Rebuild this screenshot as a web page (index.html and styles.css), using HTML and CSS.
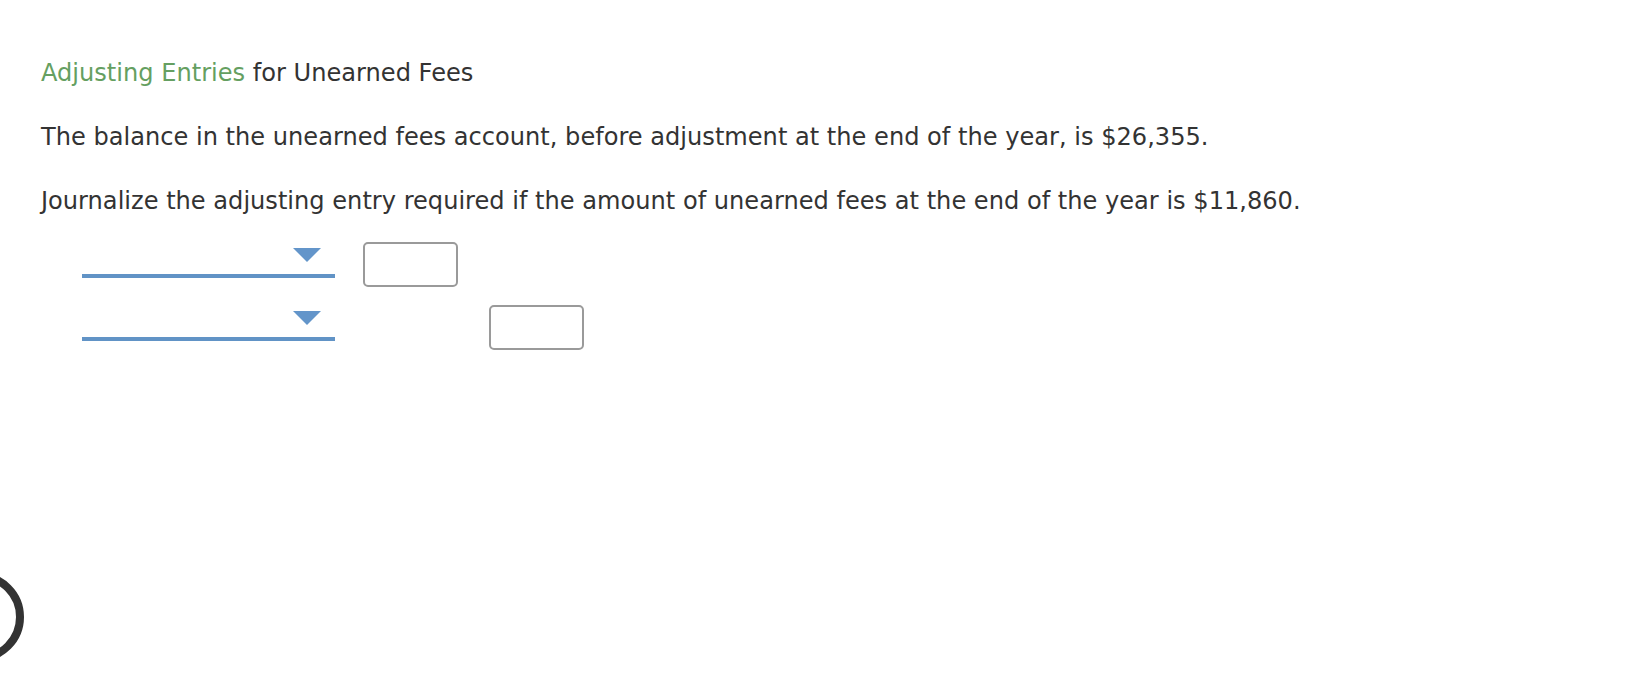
FILE: index.html
```html
<!DOCTYPE html>
<html>
<head>
<meta charset="utf-8">
<link rel="stylesheet" href="styles.css">
</head>
<body>
<div class="page">
  <p class="title"><span class="topic">Adjusting Entries</span> for Unearned Fees</p>
  <p class="text">The balance in the unearned fees account, before adjustment at the end of the year, is $26,355.</p>
  <p class="text">Journalize the adjusting entry required if the amount of unearned fees at the end of the year is $11,860.</p>
  <div class="journal">
    <div class="row">
      <div class="dropdown"><span class="caret"></span></div>
      <input class="amount" type="text">
      <div class="empty"></div>
    </div>
    <div class="row">
      <div class="dropdown"><span class="caret"></span></div>
      <div class="empty"></div>
      <input class="amount" type="text">
    </div>
  </div>
</div>
<div class="ring"></div>
</body>
</html>
```
FILE: styles.css
```css
html, body {
  margin: 0;
  padding: 0;
  background: #fff;
  overflow: hidden;
}
body {
  width: 1630px;
  height: 690px;
  position: relative;
  font-family: "DejaVu Sans", Verdana, sans-serif;
  color: #333;
}
.page {
  padding: 59px 0 0 41px;
}
.title, .text {
  margin: 0 0 36px 0;
  font-size: 24.1px;
  line-height: 28px;
  white-space: nowrap;
}
.topic {
  color: #659f61;
}
.journal {
  margin-top: -9px;
  margin-left: 41px;
  display: flex;
  flex-direction: column;
  gap: 18px;
}
.row {
  display: grid;
  grid-template-columns: 253px 95px 95px;
  column-gap: 28px;
  height: 45px;
  align-items: start;
}
.row > :nth-child(3) {
  margin-left: 3px;
}
.dropdown {
  box-sizing: border-box;
  height: 36px;
  border-bottom: 4px solid #6193c6;
  display: flex;
  justify-content: flex-end;
  align-items: flex-start;
  padding: 6px 14px 0 0;
}
.caret {
  width: 0;
  height: 0;
  border-left: 14.5px solid transparent;
  border-right: 14.5px solid transparent;
  border-top: 14px solid #6395ca;
}
.amount {
  box-sizing: border-box;
  width: 95px;
  height: 45px;
  margin: 0;
  border: 2px solid #9a9a9a;
  border-radius: 5px;
  background: #fff;
  padding: 0 6px;
  font: inherit;
  outline: none;
}
.ring {
  position: absolute;
  left: -66px;
  top: 572px;
  width: 90px;
  height: 90px;
  box-sizing: border-box;
  border: 8px solid #333;
  border-radius: 50%;
}
```
